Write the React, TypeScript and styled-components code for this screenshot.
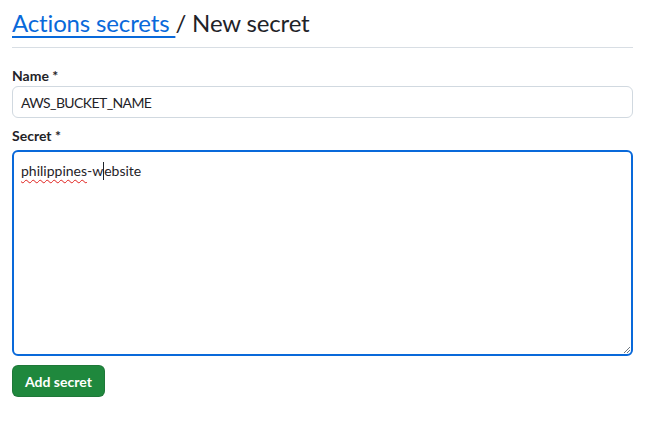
import React from "react";
import styled, { createGlobalStyle } from "styled-components";

const Global = createGlobalStyle`
  html, body { margin: 0; padding: 0; background: #ffffff; }
  body { font-family: Lato, "Noto Sans", "Liberation Sans", sans-serif; color: #1f2328; }
  * { box-sizing: border-box; }
`;

const Page = styled.div`
  width: 633px;
  padding: 8px 0 0 12px;
  display: flex;
  flex-direction: column;
`;

const Header = styled.div`
  padding-bottom: 9px;
  border-bottom: 1px solid #d8dee4;
  margin-bottom: 18px;
`;

const Title = styled.h2`
  margin: 0;
  font-size: 24px;
  font-weight: 400;
  line-height: 30px;
  letter-spacing: -0.15px;
  color: #1f2328;
`;

const Crumb = styled.a`
  color: #0969da;
  text-decoration: underline;
  text-underline-offset: 4px;
  text-decoration-thickness: 2px;
`;

const Form = styled.form`
  display: flex;
  flex-direction: column;
`;

const Field = styled.div`
  display: flex;
  flex-direction: column;
  margin-bottom: 8px;
`;

const Label = styled.label<{ $gap: number }>`
  font-size: 14px;
  font-weight: 700;
  line-height: 20px;
  margin-bottom: ${(p) => p.$gap}px;
`;

const Input = styled.div`
  height: 32px;
  border: 1px solid #d1d9e0;
  border-radius: 6px;
  padding: 0 8px;
  font-size: 14px;
  letter-spacing: -0.6px;
  display: flex;
  align-items: center;
  color: #1f2328;
`;

const TextArea = styled.div`
  position: relative;
  height: 206px;
  border: 2px solid #0969da;
  border-radius: 6px;
  padding: 9px 7px;
  font-size: 14px;
  line-height: 20px;
  color: #1f2328;
`;

const Misspelled = styled.span`
  text-decoration: underline wavy #e0201c;
  text-decoration-thickness: 1px;
  text-underline-offset: 3px;
`;

const Caret = styled.span`
  display: inline-block;
  width: 1px;
  height: 18px;
  background: #1f2328;
  vertical-align: -4px;
`;

const Grip = styled.svg`
  position: absolute;
  right: 0px;
  bottom: 0px;
`;

const Button = styled.button`
  align-self: flex-start;
  margin-top: 1px;
  height: 32px;
  padding: 0 12px;
  background: #1f883d;
  color: #ffffff;
  border: 1px solid rgba(31, 35, 40, 0.15);
  border-radius: 6px;
  font-family: inherit;
  font-size: 14px;
  font-weight: 700;
`;

export default function App() {
  return (
    <>
      <Global />
      <Page>
        <Header>
          <Title>
            <Crumb href="#">Actions secrets </Crumb> / New secret
          </Title>
        </Header>
        <Form>
          <Field>
            <Label $gap={0}>Name *</Label>
            <Input>AWS_BUCKET_NAME</Input>
          </Field>
          <Field>
            <Label $gap={4}>Secret *</Label>
            <TextArea>
              <Misspelled>philippines</Misspelled>-w<Caret />ebsite
              <Grip width="9" height="9" viewBox="0 0 9 9">
                <path d="M8 2 L2 8 M8 5 L5 8" stroke="#6e7781" strokeWidth="1" />
              </Grip>
            </TextArea>
          </Field>
          <Button type="button">Add secret</Button>
        </Form>
      </Page>
    </>
  );
}
